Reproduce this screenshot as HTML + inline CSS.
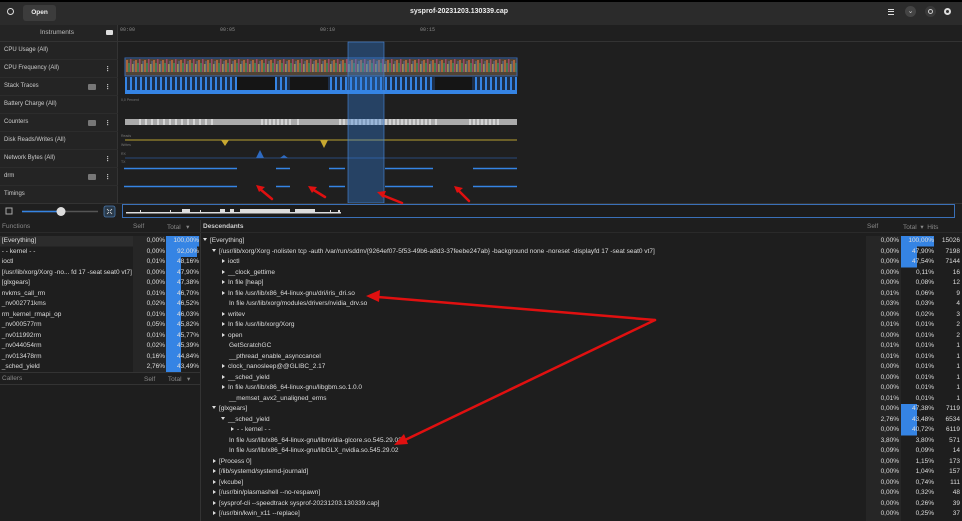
<!DOCTYPE html>
<html><head><meta charset="utf-8"><style>
*{margin:0;padding:0;box-sizing:border-box}
body{width:962px;height:521px;background:#1e1e1e;font-family:"Liberation Sans",sans-serif;font-size:6.5px;color:#ddd;position:relative;overflow:hidden}
.a{position:absolute;white-space:nowrap}
.lbl{position:absolute;left:4px;font-size:6px;color:#ccc}
.row{position:absolute;height:10.5px;line-height:10.5px;font-size:6.5px;white-space:nowrap}
.tri{display:inline-block;width:0;height:0;border-left:3px solid #ddd;border-top:2.5px solid transparent;border-bottom:2.5px solid transparent;margin-right:3px;vertical-align:0}
.trd{display:inline-block;width:0;height:0;border-top:3px solid #ddd;border-left:2.5px solid transparent;border-right:2.5px solid transparent;margin-right:3px;vertical-align:1px}
.r{text-align:right}
</style></head><body>
<!-- header -->
<div class="a" style="left:0;top:0;width:962px;height:2px;background:#000"></div>
<div class="a" style="left:0;top:2px;width:962px;height:23px;background:#2b2b2b"></div>
<div class="a" style="left:7px;top:8px;width:7px;height:7px;border:1.5px solid #ddd;border-radius:50%"></div>
<div class="a" style="left:23px;top:5px;width:33px;height:16px;background:#3c3c3c;border-radius:3px;color:#eee;font-weight:bold;font-size:6.5px;line-height:16px;text-align:center">Open</div>
<div class="a" style="left:410px;top:8px;font-weight:bold;font-size:7px;color:#eee">sysprof-20231203.130339.cap</div>
<div class="a" style="left:888px;top:9px;width:6px;height:6px;border-top:1.5px solid #ddd;border-bottom:1.5px solid #ddd"><div style="margin-top:1px;height:1.2px;background:#ddd"></div></div>
<div class="a" style="left:905px;top:6px;width:11px;height:11px;border-radius:50%;background:#444;color:#ccc;font-size:7px;line-height:11px;text-align:center">⌄</div>
<div class="a" style="left:925px;top:6px;width:11px;height:11px;border-radius:50%;background:#3a3a3a"><div style="margin:3px;width:5px;height:5px;border:1px solid #ccc;border-radius:50%"></div></div>
<div class="a" style="left:944px;top:8px;width:7px;height:7px;border-radius:50%;background:#ddd"><div style="margin:2px;width:3px;height:3px;background:#333;border-radius:50%"></div></div>
<!-- instruments column -->
<div class="a" style="left:0;top:25px;width:118px;height:179px;background:#242424;border-right:1px solid #333"></div>
<div class="a" style="left:118px;top:25px;width:844px;height:179px;background:#1f1f1f"></div>
<div class="a" style="left:40px;top:29px;color:#bbb;font-size:6.5px">Instruments</div>
<div class="a" style="left:106px;top:30px;width:7px;height:5px;background:#ddd;border-radius:1px"></div>
<div class="a" style="left:120px;top:27px;font-size:5px;color:#888;font-family:'Liberation Mono',monospace">00:00</div>
<div class="a" style="left:220px;top:27px;font-size:5px;color:#888;font-family:'Liberation Mono',monospace">00:05</div>
<div class="a" style="left:320px;top:27px;font-size:5px;color:#888;font-family:'Liberation Mono',monospace">00:10</div>
<div class="a" style="left:420px;top:27px;font-size:5px;color:#888;font-family:'Liberation Mono',monospace">00:15</div>
<div class="a" style="left:0;top:41px;width:962px;height:1px;background:#333"></div>
<div class="lbl" style="top:47px">CPU Usage (All)</div>
<div class="lbl" style="top:65px">CPU Frequency (All)</div>
<div class="lbl" style="top:83px">Stack Traces</div>
<div class="lbl" style="top:101px">Battery Charge (All)</div>
<div class="lbl" style="top:119px">Counters</div>
<div class="lbl" style="top:137px">Disk Reads/Writes (All)</div>
<div class="lbl" style="top:155px">Network Bytes (All)</div>
<div class="lbl" style="top:173px">drm</div>
<div class="lbl" style="top:191px">Timings</div>
<svg class="a" style="left:0;top:0" width="962" height="521">
<g stroke="#2c2c2c" stroke-width="1">
<line x1="0" y1="59.5" x2="118" y2="59.5"/><line x1="0" y1="77.5" x2="118" y2="77.5"/><line x1="0" y1="95.5" x2="118" y2="95.5"/><line x1="0" y1="113.5" x2="118" y2="113.5"/><line x1="0" y1="131.5" x2="118" y2="131.5"/><line x1="0" y1="149.5" x2="118" y2="149.5"/><line x1="0" y1="167.5" x2="118" y2="167.5"/><line x1="0" y1="185.5" x2="118" y2="185.5"/>
</g>
<g fill="#bbb"><rect x="107" y="66" width="1.2" height="1.2"/><rect x="107" y="68" width="1.2" height="1.2"/><rect x="107" y="70" width="1.2" height="1.2"/>
<rect x="107" y="84" width="1.2" height="1.2"/><rect x="107" y="86" width="1.2" height="1.2"/><rect x="107" y="88" width="1.2" height="1.2"/>
<rect x="107" y="120" width="1.2" height="1.2"/><rect x="107" y="122" width="1.2" height="1.2"/><rect x="107" y="124" width="1.2" height="1.2"/>
<rect x="107" y="156" width="1.2" height="1.2"/><rect x="107" y="158" width="1.2" height="1.2"/><rect x="107" y="160" width="1.2" height="1.2"/>
<rect x="107" y="174" width="1.2" height="1.2"/><rect x="107" y="176" width="1.2" height="1.2"/><rect x="107" y="178" width="1.2" height="1.2"/></g>
<g fill="#777"><rect x="88" y="84" width="8" height="6" rx="1"/><rect x="88" y="120" width="8" height="6" rx="1"/><rect x="88" y="174" width="8" height="6" rx="1"/></g>
<defs><pattern id="cf" width="9" height="18" patternUnits="userSpaceOnUse">
<rect width="9" height="18" fill="#5a4a3a"/><rect x="0" y="6" width="2" height="12" fill="#c07040"/><rect x="2" y="9" width="2" height="9" fill="#4a8a5a"/><rect x="4" y="4" width="1.5" height="14" fill="#b05070"/><rect x="6" y="10" width="2" height="8" fill="#b0a050"/><rect x="7.5" y="7" width="1" height="11" fill="#6080b0"/></pattern>
<pattern id="st" width="5" height="18" patternUnits="userSpaceOnUse"><rect width="5" height="18" fill="#1d2e48"/><rect x="0" width="2" height="18" fill="#3584e4"/></pattern></defs>
<rect x="125" y="59" width="392" height="17" fill="url(#cf)" opacity=".85"/>
<rect x="125" y="58" width="392" height="18" fill="none" stroke="#3a6ab0" stroke-width="1"/>
<rect x="125" y="77" width="392" height="17" fill="url(#st)"/>
<g fill="#151515"><rect x="237" y="77" width="38" height="14"/><rect x="290" y="77" width="38" height="14"/><rect x="435" y="77" width="37" height="14"/></g>
<rect x="125" y="90" width="392" height="4" fill="#3584e4"/>
<text x="121" y="101" font-size="3.5" fill="#777" font-family="Liberation Sans">0,0 Percent</text>
<rect x="125" y="119" width="392" height="6" fill="#aaa"/>
<g stroke="#fff" stroke-width="1"><path d="M140 119v6M146 119v6M152 119v6M158 119v6M164 119v6M170 119v6M176 119v6M182 119v6M188 119v6M194 119v6M200 119v6M206 119v6M212 119v6M262 119v6M266 119v6M270 119v6M274 119v6M278 119v6M282 119v6M286 119v6M290 119v6M298 119v6M340 119v6M344 119v6M348 119v6M352 119v6M356 119v6M360 119v6M364 119v6M368 119v6M372 119v6M376 119v6M380 119v6M386 119v6M390 119v6M394 119v6M398 119v6M402 119v6M406 119v6M410 119v6M414 119v6M418 119v6M422 119v6M426 119v6M430 119v6M436 119v6M470 119v6M474 119v6M478 119v6M482 119v6M486 119v6M490 119v6M494 119v6M498 119v6"/></g>
<text x="121" y="137" font-size="3.5" fill="#777">Reads</text><text x="121" y="146" font-size="3.5" fill="#777">Writes</text>
<line x1="125" y1="140" x2="517" y2="140" stroke="#b8a030" stroke-width="1"/>
<path d="M221 140l4 6 4-6zM320 140l4 8 4-8z" fill="#c8a830"/>
<text x="121" y="155" font-size="3.5" fill="#777">RX</text><text x="121" y="163" font-size="3.5" fill="#777">TX</text>
<line x1="125" y1="158" x2="517" y2="158" stroke="#2a4a7a" stroke-width="1"/>
<path d="M256 158l4-8 4 8zM280 158l4-3 4 3z" fill="#2e6ac0"/>
<g stroke="#3584e4" stroke-width="1.5"><path d="M124 168.5H237M276 168.5H290M329 168.5H345M385 168.5H433M473 168.5H517"/>
<path d="M124 186.5H237M276 186.5H290M329 186.5H345M385 186.5H433M473 186.5H517"/></g>
<rect x="348" y="42" width="36" height="161" fill="#3584e4" opacity=".35"/>
<rect x="348" y="42" width="36" height="161" fill="none" stroke="#4a8ae0" stroke-width=".6"/>
<line x1="0" y1="203.5" x2="962" y2="203.5" stroke="#333"/>
<rect x="0" y="204" width="962" height="16" fill="#1f1f1f"/>
<rect x="6" y="208" width="6" height="6" fill="none" stroke="#aaa" stroke-width="1"/>
<line x1="22" y1="211.5" x2="98" y2="211.5" stroke="#555" stroke-width="1.5"/>
<line x1="22" y1="211.5" x2="61" y2="211.5" stroke="#3584e4" stroke-width="1.5"/>
<circle cx="61" cy="211.5" r="4.5" fill="#ddd"/>
<rect x="104" y="206" width="11" height="11" rx="2" fill="#2a3a4a" stroke="#4a7ab0" stroke-width=".8"/>
<path d="M107 209l2 2M112 209l-2 2M107 214l2-2M112 214l-2-2" stroke="#ddd" stroke-width=".8"/>
<rect x="122.5" y="204.5" width="832" height="13" fill="#1c1c1c" stroke="#3a70b8" stroke-width="1"/>
<g fill="#ddd"><rect x="126" y="212" width="215" height="1.5"/>
<path d="M140 210h1v2h-1zM170 210h1v2h-1zM182 209h8v3h-8zM200 210h1v2h-1zM220 209h5v3h-5zM230 209h4v3h-4zM240 209h50v3h-50zM295 209h20v3h-20zM330 210h1v2h-1zM338 210h2v2h-2z"/></g>
<rect x="0" y="220" width="962" height="301" fill="#1e1e1e"/>
<line x1="200.5" y1="220" x2="200.5" y2="521" stroke="#333"/>
<rect x="0" y="236" width="200" height="10.5" fill="#2c2c2c"/>
<rect x="133" y="236" width="33" height="136" fill="#262626"/>
<rect x="166" y="236" width="33" height="10.5" fill="#3584e4"/>
<rect x="166" y="246.5" width="31" height="10.5" fill="#3584e4"/>
<rect x="166" y="257" width="15" height="115" fill="#3584e4"/>
<line x1="0" y1="372.5" x2="200" y2="372.5" stroke="#333"/>
<line x1="0" y1="384.5" x2="200" y2="384.5" stroke="#333"/>
<rect x="866" y="236" width="35" height="285" fill="#262626"/>
<rect x="901" y="236" width="33" height="10.5" fill="#3584e4"/>
<rect x="901" y="246.5" width="16" height="21" fill="#3584e4"/>
<rect x="901" y="404" width="16" height="31.5" fill="#3584e4"/>
<line x1="0" y1="232.5" x2="962" y2="232.5" stroke="#2a2a2a"/>
</svg>
<div class="a" style="left:2px;top:223px;color:#888">Functions</div>
<div class="a" style="left:133px;top:223px;color:#888">Self</div>
<div class="a" style="left:167px;top:223px;color:#888">Total &nbsp;&nbsp;▾</div>
<div class="a" style="left:203px;top:223px;color:#ccc;font-weight:bold">Descendants</div>
<div class="a" style="left:867px;top:223px;color:#888">Self</div>
<div class="a" style="left:903px;top:223px;color:#888">Total &nbsp;▾ &nbsp;Hits</div>
<div class="a" style="left:2px;top:375px;color:#888">Callers</div>
<div class="a" style="left:144px;top:375px;color:#888">Self &nbsp;&nbsp;&nbsp;&nbsp;&nbsp;&nbsp;Total &nbsp;&nbsp;▾</div>
<div class="a" style="left:0;top:236px;width:200px">
<div class="row" style="top:0">&nbsp;[Everything]</div>
<div class="row" style="top:10.5px">&nbsp;- - kernel - -</div>
<div class="row" style="top:21px">&nbsp;ioctl</div>
<div class="row" style="top:31.5px">&nbsp;[/usr/lib/xorg/Xorg -no... fd 17 -seat seat0 vt7]</div>
<div class="row" style="top:42px">&nbsp;[glxgears]</div>
<div class="row" style="top:52.5px">&nbsp;nvkms_call_rm</div>
<div class="row" style="top:63px">&nbsp;_nv002771kms</div>
<div class="row" style="top:73.5px">&nbsp;rm_kernel_rmapi_op</div>
<div class="row" style="top:84px">&nbsp;_nv000577rm</div>
<div class="row" style="top:94.5px">&nbsp;_nv011992rm</div>
<div class="row" style="top:105px">&nbsp;_nv044054rm</div>
<div class="row" style="top:115.5px">&nbsp;_nv013478rm</div>
<div class="row" style="top:126px">&nbsp;_sched_yield</div>
</div>
<div class="a r" style="left:133px;top:236px;width:32px">
<div class="row r" style="top:0;width:32px">0,00%</div><div class="row r" style="top:10.5px;width:32px">0,00%</div><div class="row r" style="top:21px;width:32px">0,01%</div><div class="row r" style="top:31.5px;width:32px">0,00%</div><div class="row r" style="top:42px;width:32px">0,00%</div><div class="row r" style="top:52.5px;width:32px">0,01%</div><div class="row r" style="top:63px;width:32px">0,02%</div><div class="row r" style="top:73.5px;width:32px">0,01%</div><div class="row r" style="top:84px;width:32px">0,05%</div><div class="row r" style="top:94.5px;width:32px">0,01%</div><div class="row r" style="top:105px;width:32px">0,02%</div><div class="row r" style="top:115.5px;width:32px">0,16%</div><div class="row r" style="top:126px;width:32px">2,76%</div>
</div>
<div class="a" style="left:166px;top:236px;width:33px">
<div class="row r" style="top:0;width:33px">100,00%</div><div class="row r" style="top:10.5px;width:33px">92,00%</div><div class="row r" style="top:21px;width:33px">48,16%</div><div class="row r" style="top:31.5px;width:33px">47,90%</div><div class="row r" style="top:42px;width:33px">47,38%</div><div class="row r" style="top:52.5px;width:33px">46,70%</div><div class="row r" style="top:63px;width:33px">46,52%</div><div class="row r" style="top:73.5px;width:33px">46,03%</div><div class="row r" style="top:84px;width:33px">45,82%</div><div class="row r" style="top:94.5px;width:33px">45,77%</div><div class="row r" style="top:105px;width:33px">45,39%</div><div class="row r" style="top:115.5px;width:33px">44,84%</div><div class="row r" style="top:126px;width:33px">43,49%</div>
</div>
<div class="a" style="left:203px;top:236px;width:660px">
<div class="row" style="left:0;top:0"><span class="trd"></span>[Everything]</div>
<div class="row" style="left:9px;top:10.5px"><span class="trd"></span>[/usr/lib/xorg/Xorg -nolisten tcp -auth /var/run/sddm/{9264ef07-5f53-49b6-a8d3-37feebe247ab} -background none -noreset -displayfd 17 -seat seat0 vt7]</div>
<div class="row" style="left:19px;top:21px"><span class="tri"></span>ioctl</div>
<div class="row" style="left:19px;top:31.5px"><span class="tri"></span>__clock_gettime</div>
<div class="row" style="left:19px;top:42px"><span class="tri"></span>In file [heap]</div>
<div class="row" style="left:19px;top:52.5px"><span class="tri"></span>In file /usr/lib/x86_64-linux-gnu/dri/iris_dri.so</div>
<div class="row" style="left:26px;top:63px">In file /usr/lib/xorg/modules/drivers/nvidia_drv.so</div>
<div class="row" style="left:19px;top:73.5px"><span class="tri"></span>writev</div>
<div class="row" style="left:19px;top:84px"><span class="tri"></span>In file /usr/lib/xorg/Xorg</div>
<div class="row" style="left:19px;top:94.5px"><span class="tri"></span>open</div>
<div class="row" style="left:26px;top:105px">GetScratchGC</div>
<div class="row" style="left:26px;top:115.5px">__pthread_enable_asynccancel</div>
<div class="row" style="left:19px;top:126px"><span class="tri"></span>clock_nanosleep@@GLIBC_2.17</div>
<div class="row" style="left:19px;top:136.5px"><span class="tri"></span>__sched_yield</div>
<div class="row" style="left:19px;top:147px"><span class="tri"></span>In file /usr/lib/x86_64-linux-gnu/libgbm.so.1.0.0</div>
<div class="row" style="left:26px;top:157.5px">__memset_avx2_unaligned_erms</div>
<div class="row" style="left:9px;top:168px"><span class="trd"></span>[glxgears]</div>
<div class="row" style="left:18px;top:178.5px"><span class="trd"></span>__sched_yield</div>
<div class="row" style="left:28px;top:189px"><span class="tri"></span>- - kernel - -</div>
<div class="row" style="left:26px;top:199.5px">In file /usr/lib/x86_64-linux-gnu/libnvidia-glcore.so.545.29.02</div>
<div class="row" style="left:26px;top:210px">In file /usr/lib/x86_64-linux-gnu/libGLX_nvidia.so.545.29.02</div>
<div class="row" style="left:10px;top:220.5px"><span class="tri"></span>[Process 0]</div>
<div class="row" style="left:10px;top:231px"><span class="tri"></span>[/lib/systemd/systemd-journald]</div>
<div class="row" style="left:10px;top:241.5px"><span class="tri"></span>[vkcube]</div>
<div class="row" style="left:10px;top:252px"><span class="tri"></span>[/usr/bin/plasmashell --no-respawn]</div>
<div class="row" style="left:10px;top:262.5px"><span class="tri"></span>[sysprof-cli --speedtrack sysprof-20231203.130339.cap]</div>
<div class="row" style="left:10px;top:273px"><span class="tri"></span>[/usr/bin/kwin_x11 --replace]</div>
</div>
<div class="a" style="left:866px;top:236px;width:96px;font-size:6.5px">
<div class="row r" style="left:0;width:33px;top:0">0,00%</div><div class="row r" style="left:0;width:33px;top:10.5px">0,00%</div><div class="row r" style="left:0;width:33px;top:21px">0,00%</div><div class="row r" style="left:0;width:33px;top:31.5px">0,00%</div><div class="row r" style="left:0;width:33px;top:42px">0,00%</div><div class="row r" style="left:0;width:33px;top:52.5px">0,01%</div><div class="row r" style="left:0;width:33px;top:63px">0,03%</div><div class="row r" style="left:0;width:33px;top:73.5px">0,00%</div><div class="row r" style="left:0;width:33px;top:84px">0,01%</div><div class="row r" style="left:0;width:33px;top:94.5px">0,00%</div><div class="row r" style="left:0;width:33px;top:105px">0,01%</div><div class="row r" style="left:0;width:33px;top:115.5px">0,01%</div><div class="row r" style="left:0;width:33px;top:126px">0,00%</div><div class="row r" style="left:0;width:33px;top:136.5px">0,00%</div><div class="row r" style="left:0;width:33px;top:147px">0,00%</div><div class="row r" style="left:0;width:33px;top:157.5px">0,01%</div><div class="row r" style="left:0;width:33px;top:168px">0,00%</div><div class="row r" style="left:0;width:33px;top:178.5px">2,76%</div><div class="row r" style="left:0;width:33px;top:189px">0,00%</div><div class="row r" style="left:0;width:33px;top:199.5px">3,80%</div><div class="row r" style="left:0;width:33px;top:210px">0,09%</div><div class="row r" style="left:0;width:33px;top:220.5px">0,00%</div><div class="row r" style="left:0;width:33px;top:231px">0,00%</div><div class="row r" style="left:0;width:33px;top:241.5px">0,00%</div><div class="row r" style="left:0;width:33px;top:252px">0,00%</div><div class="row r" style="left:0;width:33px;top:262.5px">0,00%</div><div class="row r" style="left:0;width:33px;top:273px">0,00%</div>
<div class="row r" style="left:35px;width:33px;top:0">100,00%</div><div class="row r" style="left:35px;width:33px;top:10.5px">47,90%</div><div class="row r" style="left:35px;width:33px;top:21px">47,54%</div><div class="row r" style="left:35px;width:33px;top:31.5px">0,11%</div><div class="row r" style="left:35px;width:33px;top:42px">0,08%</div><div class="row r" style="left:35px;width:33px;top:52.5px">0,06%</div><div class="row r" style="left:35px;width:33px;top:63px">0,03%</div><div class="row r" style="left:35px;width:33px;top:73.5px">0,02%</div><div class="row r" style="left:35px;width:33px;top:84px">0,01%</div><div class="row r" style="left:35px;width:33px;top:94.5px">0,01%</div><div class="row r" style="left:35px;width:33px;top:105px">0,01%</div><div class="row r" style="left:35px;width:33px;top:115.5px">0,01%</div><div class="row r" style="left:35px;width:33px;top:126px">0,01%</div><div class="row r" style="left:35px;width:33px;top:136.5px">0,01%</div><div class="row r" style="left:35px;width:33px;top:147px">0,01%</div><div class="row r" style="left:35px;width:33px;top:157.5px">0,01%</div><div class="row r" style="left:35px;width:33px;top:168px">47,38%</div><div class="row r" style="left:35px;width:33px;top:178.5px">43,48%</div><div class="row r" style="left:35px;width:33px;top:189px">40,72%</div><div class="row r" style="left:35px;width:33px;top:199.5px">3,80%</div><div class="row r" style="left:35px;width:33px;top:210px">0,09%</div><div class="row r" style="left:35px;width:33px;top:220.5px">1,15%</div><div class="row r" style="left:35px;width:33px;top:231px">1,04%</div><div class="row r" style="left:35px;width:33px;top:241.5px">0,74%</div><div class="row r" style="left:35px;width:33px;top:252px">0,32%</div><div class="row r" style="left:35px;width:33px;top:262.5px">0,26%</div><div class="row r" style="left:35px;width:33px;top:273px">0,25%</div>
<div class="row r" style="left:68px;width:26px;top:0">15026</div><div class="row r" style="left:68px;width:26px;top:10.5px">7198</div><div class="row r" style="left:68px;width:26px;top:21px">7144</div><div class="row r" style="left:68px;width:26px;top:31.5px">16</div><div class="row r" style="left:68px;width:26px;top:42px">12</div><div class="row r" style="left:68px;width:26px;top:52.5px">9</div><div class="row r" style="left:68px;width:26px;top:63px">4</div><div class="row r" style="left:68px;width:26px;top:73.5px">3</div><div class="row r" style="left:68px;width:26px;top:84px">2</div><div class="row r" style="left:68px;width:26px;top:94.5px">2</div><div class="row r" style="left:68px;width:26px;top:105px">1</div><div class="row r" style="left:68px;width:26px;top:115.5px">1</div><div class="row r" style="left:68px;width:26px;top:126px">1</div><div class="row r" style="left:68px;width:26px;top:136.5px">1</div><div class="row r" style="left:68px;width:26px;top:147px">1</div><div class="row r" style="left:68px;width:26px;top:157.5px">1</div><div class="row r" style="left:68px;width:26px;top:168px">7119</div><div class="row r" style="left:68px;width:26px;top:178.5px">6534</div><div class="row r" style="left:68px;width:26px;top:189px">6119</div><div class="row r" style="left:68px;width:26px;top:199.5px">571</div><div class="row r" style="left:68px;width:26px;top:210px">14</div><div class="row r" style="left:68px;width:26px;top:220.5px">173</div><div class="row r" style="left:68px;width:26px;top:231px">157</div><div class="row r" style="left:68px;width:26px;top:241.5px">111</div><div class="row r" style="left:68px;width:26px;top:252px">48</div><div class="row r" style="left:68px;width:26px;top:262.5px">39</div><div class="row r" style="left:68px;width:26px;top:273px">37</div>
</div>
<svg class="a" style="left:0;top:0" width="962" height="521">
<g stroke="#e01010" stroke-width="2.5" fill="none" stroke-linecap="round">
<path d="M655 320L378 297"/><path d="M655 320L405 440"/>
<path d="M272 199L260 189"/><path d="M325 197L312 189"/><path d="M402 203L382 195"/><path d="M469 201L458 190"/>
</g>
<g fill="#e01010">
<path d="M366 296l14-6 -1 12z"/><path d="M394 445l10-11 4 10z"/>
<path d="M256 185l9 2-6 5z"/><path d="M308 186l9 1-5 6z"/><path d="M377 192l9-1-3 7z"/><path d="M454 186l9 2-6 5z"/>
</g>
</svg>
</body></html>
